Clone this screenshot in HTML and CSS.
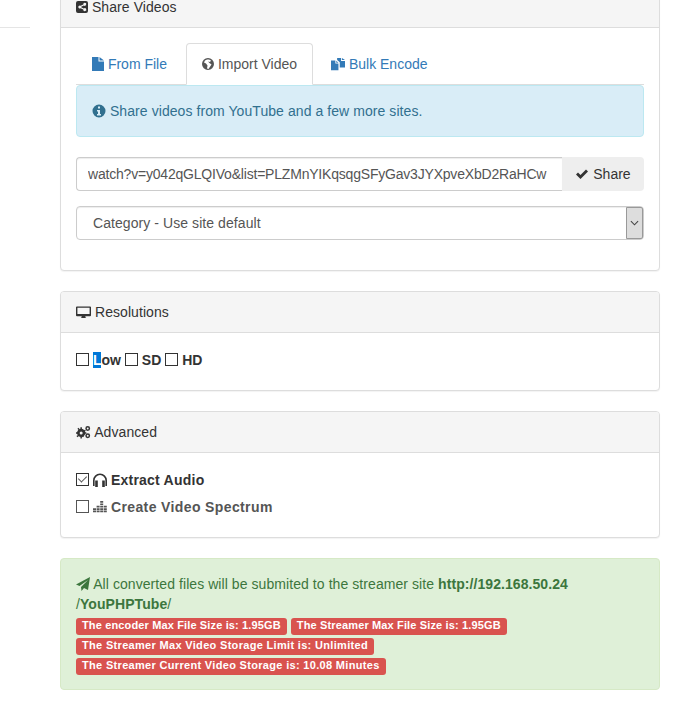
FILE: index.html
```html
<!DOCTYPE html>
<html lang="en">
<head>
    <meta charset="UTF-8">
    <title>Share Videos</title>
    <link rel="stylesheet" href="styles.css">
</head>
<body>
    <div class="page">
        <div class="side">
            <div class="side-line"></div>
        </div>
        <div class="main">
            <div class="panel">
                <div class="panel-heading">
                    <svg class="icon icon-12" viewBox="0 0 12 14"><path fill-rule="evenodd" d="M2 1h8a2 2 0 0 1 2 2v8a2 2 0 0 1-2 2H2a2 2 0 0 1-2-2V3a2 2 0 0 1 2-2zM8.800 2.800a1.500 1.500 0 0 0-1.500 1.700L4.700 5.800a1.500 1.500 0 1 0 0 2.400l2.600 1.300a1.500 1.500 0 1 0 .5-1L5.200 7.200v-.4l2.600-1.300A1.500 1.500 0 1 0 8.800 2.800z"/></svg>
                    Share Videos
                </div>
                <div class="panel-body">
                    <ul class="tabs">
                        <li><a href="#file"><svg class="icon icon-12" viewBox="0 0 12 14"><path d="M0 0h6.500v4.500H12V14H0zM7.500 0L12 3.500H7.500z"/></svg> From File</a></li>
                        <li class="active"><a href="#import"><svg class="icon icon-12" viewBox="1 1 12 12"><path fill-rule="evenodd" d="M7 1a6 6 0 1 1 0 12A6 6 0 0 1 7 1zM6 2.500L4 3.500 3 5.500l2 1 1.500 2-.5 3 1.500.5 2-3 1-1.500-2-1.500L7 4.500l2 .5 1-1.500-2-1z"/></svg> Import Video</a></li>
                        <li><a href="#bulk"><svg class="icon" viewBox="0 0 16 14"><path d="M0 3h5v3.500h3.500V14H0zM6 3.200L8.500 5.500H6zM7 0h4.500v3.500H16V11h-6V5L7 2.500zM12.500 0L16 2.500h-3.500z"/></svg> Bulk Encode</a></li>
                    </ul>
                    <div class="alert-info">
                        <svg class="icon" viewBox="0 0 14 14"><path fill-rule="evenodd" d="M7 .5a6.500 6.500 0 1 1 0 13 6.500 6.500 0 0 1 0-13zM6 2.500v2h2v-2zM5 6v1.500h1V10H5v1.500h4V10H8V6z"/></svg>
                        Share videos from YouTube and a few more sites.
                    </div>
                    <div class="input-group">
                        <input class="url-input" type="text" value="watch?v=y042qGLQIVo&amp;list=PLZMnYIKqsqgSFyGav3JYXpveXbD2RaHCw">
                        <button class="share-btn" type="button">
                            <svg class="icon" viewBox="0 0 14 14"><path d="M1 7.500l2-2 2.500 2.500L11 2.500l2 2-7.500 7.500z"/></svg>
                            Share
                        </button>
                    </div>
                    <div class="select-wrap">
                        <select class="category">
                            <option>Category - Use site default</option>
                        </select>
                        <span class="select-arrow"><svg viewBox="0 0 10 6"><path d="M1 1l4 4 4-4" fill="none" stroke="#444" stroke-width="1.200"/></svg></span>
                    </div>
                </div>
            </div>

            <div class="panel">
                <div class="panel-heading">
                    <svg class="icon icon-15" viewBox="0 0 16 14"><path fill-rule="evenodd" d="M1 1h14a1 1 0 0 1 1 1v8.500a1 1 0 0 1-1 1H10v1l1 .8H5l1-.8v-1H1a1 1 0 0 1-1-1V2a1 1 0 0 1 1-1zM1.500 2.500V9h13V2.500z"/></svg>
                    Resolutions
                </div>
                <div class="panel-body options">
                    <div class="option-row">
                        <label class="check"><input type="checkbox"> <b><span class="selected">L</span>ow</b></label>
                        <label class="check"><input type="checkbox"> <b>SD</b></label>
                        <label class="check"><input type="checkbox"> <b>HD</b></label>
                    </div>
                </div>
            </div>

            <div class="panel">
                <div class="panel-heading">
                    <svg class="icon icon-15" viewBox="0 0 16 14"><circle cx="5.500" cy="8" r="3" fill="none" stroke="#333" stroke-width="2.800"/><path d="M4.700 2h1.600v2.500H4.700zM4.700 11.500h1.600V14H4.700zM0 7.200h2.500v1.600H0zM8.500 7.200H11v1.600H8.500zM1.500 3.500l1.200-1 1.500 1.700-1.200 1zM8.500 11.500l-1.200 1-1.500-1.700 1.200-1zM1.500 12.500l-1-1.200 2-1.500 1 1.200zM9.500 4.500l1 1.200-2 1.500-1-1.200z"/><circle cx="12.500" cy="3.200" r="1.800" fill="none" stroke="#333" stroke-width="1.600"/><circle cx="12.500" cy="11" r="1.800" fill="none" stroke="#333" stroke-width="1.600"/></svg>
                    Advanced
                </div>
                <div class="panel-body options">
                    <label class="check row"><input type="checkbox" checked>
                        <svg class="icon" viewBox="0 0 14 14"><path fill-rule="evenodd" d="M7 .5a7 7 0 0 1 7 7V13h-1.600V7.500a5.400 5.400 0 0 0-10.800 0V13H0V7.500a7 7 0 0 1 7-7zM2.200 7.500h2.600v6.500H2.200zM9.200 7.500h2.600v6.500H9.200z"/></svg>
                        <b class="wide">Extract Audio</b></label>
                    <label class="check row muted"><input type="checkbox">
                        <svg class="icon" viewBox="0 0 14 14"><path d="M7.200 1h3v1.700h-3zM7.200 3.400h3v1.700h-3zM7.200 5.800h3v1.700h-3zM7.200 8.200h3v1.700h-3zM7.200 10.600h3v1.700h-3zM10.800 5.800h3v1.700h-3zM10.800 8.200h3v1.700h-3zM10.800 10.600h3v1.700h-3zM3.600 5.800h3v1.700h-3zM3.600 8.200h3v1.700h-3zM3.600 10.600h3v1.700h-3zM0 8.200h3v1.700H0zM0 10.600h3v1.700H0z"/></svg>
                        <b class="wider">Create Video Spectrum</b></label>
                </div>
            </div>

            <div class="alert-success">
                <div class="alert-text">
                    <svg class="icon" viewBox="0 0 14 14"><path d="M14 0L12 13 8 11 5.500 14 5 10 12 3 3.500 9 0 7.500z"/></svg>
                    All converted files will be submited to the streamer site <b>http://192.168.50.24</b>
                    /<b>YouPHPTube</b>/
                </div>
                <div class="labels">
                    <span class="label">The encoder Max File Size is: 1.95GB</span>
                    <span class="label">The Streamer Max File Size is: 1.95GB</span>
                </div>
                <div class="labels">
                    <span class="label label-wide">The Streamer Max Video Storage Limit is: Unlimited</span>
                </div>
                <div class="labels">
                    <span class="label label-wide">The Streamer Current Video Storage is: 10.08 Minutes</span>
                </div>
            </div>
        </div>
    </div>
</body>
</html>
```

FILE: styles.css
```css
body {
    font-family: "Liberation Sans", Arial, sans-serif;
    font-size: 14px;
    line-height: 20px;
    letter-spacing: 0.07px;
    color: #333;
    margin: 0;
    background-color: #fff;
    overflow: hidden;
}
.page {
    display: flex;
    margin-top: -14px; /* page is scrolled a little */
}
.side {
    width: 30px;
    margin-right: 30px;
    flex-shrink: 0;
}
.side-line {
    height: 1px;
    margin-top: 41px;
    background-color: #e5e5e5;
}
.main {
    width: 600px;
}
.icon {
    width: 14px;
    height: 14px;
    fill: currentColor;
    vertical-align: -2px;
}
.icon-12 {
    width: 12px;
}
.icon-15 {
    width: 15px;
}

/* Panels */
.panel {
    background-color: #fff;
    border: 1px solid #ddd;
    border-radius: 4px;
    box-shadow: 0 1px 1px rgba(0, 0, 0, 0.05);
    margin-bottom: 20px;
}
.panel-heading {
    background-color: #f5f5f5;
    border-bottom: 1px solid #ddd;
    border-radius: 3px 3px 0 0;
    padding: 10px 15px;
}
.panel-body {
    padding: 15px;
}

/* Tabs */
.tabs {
    display: flex;
    list-style: none;
    margin: 0;
    padding: 0;
    border-bottom: 1px solid #ddd;
    letter-spacing: 0;
}
.tabs li {
    margin-bottom: -1px;
    margin-right: 2px;
}
.tabs li:first-child {
    margin-right: 3px;
}
.tabs a {
    display: block;
    padding: 10px 15px;
    color: #337ab7;
    text-decoration: none;
    border: 1px solid transparent;
    border-radius: 4px 4px 0 0;
}
.tabs .active a {
    color: #555;
    background-color: #fff;
    border-color: #ddd #ddd transparent;
}

/* Alerts */
.alert-info {
    color: #31708f;
    background-color: #d9edf7;
    border: 1px solid #bce8f1;
    border-radius: 4px;
    padding: 15px;
    margin-bottom: 20px;
}
.alert-success {
    color: #3c763d;
    background-color: #dff0d8;
    border: 1px solid #d6e9c6;
    border-radius: 4px;
    padding: 15px 15px 13px;
    margin-bottom: 20px;
}
.alert-text {
    margin-bottom: 2px;
}
.labels {
    display: flex;
    gap: 4px;
    height: 20px;
    align-items: center;
}
.label {
    display: block;
    background-color: #d9534f;
    color: #fff;
    font-size: 11px;
    font-weight: bold;
    letter-spacing: 0.14px;
    line-height: 11px;
    padding: 2px 6px 4px;
    border-radius: 3px;
    white-space: nowrap;
}
.label-wide {
    letter-spacing: 0.32px;
}

/* Form */
.input-group {
    display: flex;
    margin-bottom: 15px;
}
.url-input {
    flex: 1;
    min-width: 0;
    height: 34px;
    box-sizing: border-box;
    font-family: inherit;
    font-size: 14px;
    letter-spacing: -0.2px;
    color: #555;
    padding: 6px 12px 6px 11px;
    border: 1px solid #ccc;
    border-right: none;
    border-radius: 4px 0 0 4px;
    box-shadow: inset 0 1px 1px rgba(0, 0, 0, 0.075);
    outline: none;
}
.share-btn {
    width: 82px;
    font-family: inherit;
    font-size: 14px;
    color: #333;
    background-color: #eee;
    border: none;
    border-radius: 0 4px 4px 0;
    padding: 0;
}
.select-wrap {
    position: relative;
    margin-bottom: 15px;
}
.category {
    display: block;
    width: 100%;
    height: 34px;
    box-sizing: border-box;
    appearance: none;
    font-family: inherit;
    font-size: 14px;
    letter-spacing: 0.07px;
    color: #555;
    background-color: #fff;
    padding: 6px 12px 6px 12px;
    text-indent: 4px;
    border: 1px solid #ccc;
    border-radius: 4px;
    box-shadow: inset 0 1px 1px rgba(0, 0, 0, 0.075);
}
.select-arrow {
    position: absolute;
    top: 1px;
    right: 1px;
    bottom: 1px;
    width: 15px;
    display: flex;
    align-items: center;
    justify-content: center;
    background-color: #ddd;
    border: 1px solid #999;
    border-radius: 0 2px 2px 0;
}
.select-arrow svg {
    width: 9px;
    height: 6px;
}

/* Checkboxes */
.options {
    padding-top: 17px;
    padding-bottom: 13px;
}
.option-row {
    display: flex;
    gap: 4px;
    margin-bottom: 7px;
    letter-spacing: 0;
}
.check {
    display: block;
}
.check.row {
    margin-bottom: 7px;
}
.muted {
    color: #555;
}
.check input {
    appearance: none;
    width: 13px;
    height: 13px;
    margin: 0;
    border: 1px solid #333;
    background-color: #fff;
    vertical-align: -1px;
    position: relative;
}
.muted input {
    border-color: #555;
}
.check input:checked::after {
    content: "";
    position: absolute;
    left: 3px;
    top: 0;
    width: 4px;
    height: 7px;
    border: solid #555;
    border-width: 0 1px 1px 0;
    transform: rotate(45deg);
}
.wide {
    letter-spacing: 0.23px;
}
.wider {
    letter-spacing: 0.38px;
}
.selected {
    background-color: #0078d7;
    color: #fff;
}
```
